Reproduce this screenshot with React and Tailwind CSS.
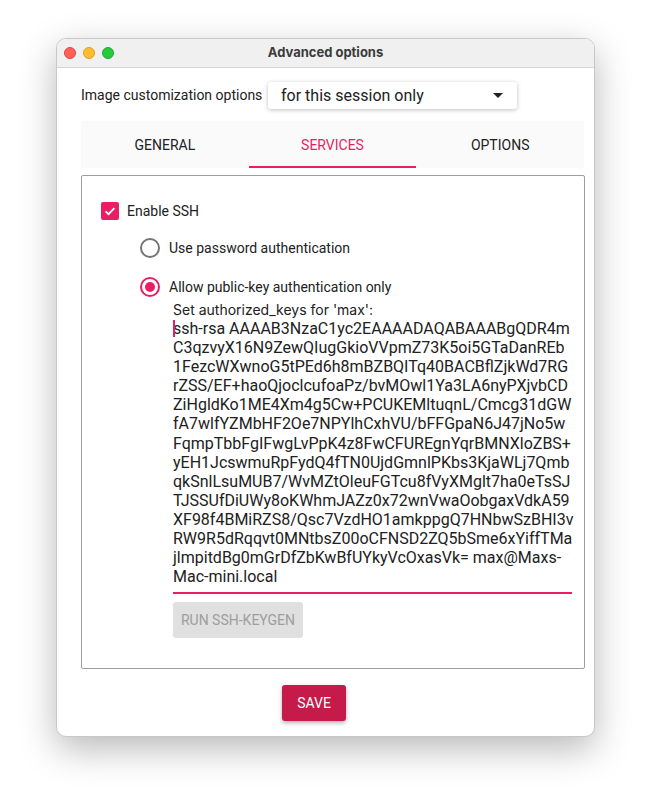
import React from 'react';

const keyLines = [
  'ssh-rsa AAAAB3NzaC1yc2EAAAADAQABAAABgQDR4m',
  'C3qzvyX16N9ZewQIugGkioVVpmZ73K5oi5GTaDanREb',
  '1FezcWXwnoG5tPEd6h8mBZBQITq40BACBflZjkWd7RG',
  'rZSS/EF+haoQjoclcufoaPz/bvMOwl1Ya3LA6nyPXjvbCD',
  'ZiHgldKo1ME4Xm4g5Cw+PCUKEMltuqnL/Cmcg31dGW',
  'fA7wlfYZMbHF2Oe7NPYlhCxhVU/bFFGpaN6J47jNo5w',
  'FqmpTbbFgIFwgLvPpK4z8FwCFUREgnYqrBMNXloZBS+',
  'yEH1JcswmuRpFydQ4fTN0UjdGmnlPKbs3KjaWLj7Qmb',
  'qkSnlLsuMUB7/WvMZtOleuFGTcu8fVyXMglt7ha0eTsSJ',
  'TJSSUfDiUWy8oKWhmJAZz0x72wnVwaOobgaxVdkA59',
  'XF98f4BMiRZS8/Qsc7VzdHO1amkppgQ7HNbwSzBHI3v',
  'RW9R5dRqqvt0MNtbsZ00oCFNSD2ZQ5bSme6xYiffTMa',
  'jlmpitdBg0mGrDfZbKwBfUYkyVcOxasVk= max@Maxs-',
  'Mac-mini.local',
];

const Radio = ({ checked, label }) => (
  <div className="flex items-center gap-[9px] h-[20px]">
    <div
      className={
        'w-[20px] h-[20px] rounded-full border-2 flex items-center justify-center ' +
        (checked ? 'border-[#e91e63]' : 'border-[#757575]')
      }
    >
      {checked && <div className="w-[10px] h-[10px] rounded-full bg-[#e91e63]" />}
    </div>
    <span className="text-[14px] text-[#212121]">{label}</span>
  </div>
);

export default function App() {
  return (
    <div className="w-[651px] h-[811px] bg-white pt-[38px] pl-[56px] font-['Roboto',sans-serif]">
      <div className="w-[539px] h-[699px] bg-white rounded-[10px] border border-[#c8c8c8] shadow-[0_12px_36px_rgba(0,0,0,0.28)] overflow-hidden flex flex-col">
        {/* title bar */}
        <div className="h-[29px] bg-[#eff0ef] border-b border-[#d6d6d6] flex items-center relative shrink-0">
          <div className="flex items-center gap-[7px] pl-[7px]">
            <div className="w-[12px] h-[12px] rounded-full bg-[#fe5f57] border border-[#e0443e]" />
            <div className="w-[12px] h-[12px] rounded-full bg-[#febc2e] border border-[#dea123]" />
            <div className="w-[12px] h-[12px] rounded-full bg-[#28c840] border border-[#1aab29]" />
          </div>
          <div className="absolute inset-0 flex items-center justify-center text-[13px] font-bold text-[#3b3b3b] font-['Inter',sans-serif]">
            Advanced options
          </div>
        </div>

        <div className="pl-[24px] pr-[10px] flex flex-col">
          {/* customization dropdown */}
          <div className="flex items-center mt-[14px] h-[27px]">
            <span className="text-[14px] text-[#212121] w-[187px]">Image customization options</span>
            <div className="w-[249px] h-[27px] bg-white rounded-[3px] shadow-[0_1px_4px_rgba(0,0,0,0.25)] flex items-center justify-between pl-[13px] pr-[14px]">
              <span className="text-[16px] text-[#212121]">for this session only</span>
              <svg width="10" height="5" viewBox="0 0 10 5">
                <path d="M0 0h10L5 5z" fill="#212121" />
              </svg>
            </div>
          </div>

          {/* tabs */}
          <div className="mt-[12px] h-[47px] bg-[#fafafa] flex">
            <div className="w-[168px] flex items-center justify-center text-[14px] text-[#212121] pt-[1px]">GENERAL</div>
            <div className="w-[168px] flex items-center justify-center text-[14px] text-[#e91e63] border-b-2 border-[#e91e63] pt-[3px]">
              SERVICES
            </div>
            <div className="w-[168px] flex items-center justify-center text-[14px] text-[#212121] pt-[1px]">OPTIONS</div>
          </div>

          {/* content box */}
          <div className="mt-[7px] h-[494px] w-[504px] border border-[#9e9e9e] rounded-[2px] flex flex-col pl-[19px] pt-[25px]">
            <div className="flex items-center gap-[8px] h-[20px]">
              <div className="w-[18px] h-[18px] rounded-[2px] bg-[#e91e63] flex items-center justify-center">
                <svg width="14" height="14" viewBox="0 0 24 24">
                  <path d="M4.5 12.5l5 5 10-10.5" fill="none" stroke="white" strokeWidth="3" />
                </svg>
              </div>
              <span className="text-[14px] text-[#212121]">Enable SSH</span>
            </div>

            <div className="pl-[39px] flex flex-col">
              <div className="mt-[17px]">
                <Radio label="Use password authentication" />
              </div>
              <div className="mt-[19px]">
                <Radio checked label="Allow public-key authentication only" />
              </div>

              <div className="pl-[33px] flex flex-col">
                <div className="mt-[5px] text-[14px] leading-[16px] text-[#212121] font-['Inter',sans-serif]">Set authorized_keys for 'max':</div>
                <div className="mt-[1px] w-[399px] border-b-2 border-[#e91e63] pb-[6px]">
                  {keyLines.map((l, i) => (
                    <div key={i} className="text-[16px] leading-[19.1px] text-[#212121] whitespace-nowrap relative">
                      {i === 0 && <span className="absolute left-0 top-[1px] w-[2px] h-[17px] bg-[#e91e63]" />}
                      {l}
                    </div>
                  ))}
                </div>
                <div className="mt-[8px] w-[130px] h-[36px] bg-[#e0e0e0] rounded-[3px] flex items-center justify-center text-[14px] text-[#9e9e9e]">
                  RUN SSH-KEYGEN
                </div>
              </div>
            </div>
          </div>

          {/* save */}
          <div className="mt-[16px] flex pl-[201px]">
            <div className="w-[64px] h-[36px] bg-[#c51a4a] rounded-[3px] shadow-[0_2px_4px_rgba(0,0,0,0.3)] flex items-center justify-center text-[14px] text-white">
              SAVE
            </div>
          </div>
        </div>
      </div>
    </div>
  );
}
